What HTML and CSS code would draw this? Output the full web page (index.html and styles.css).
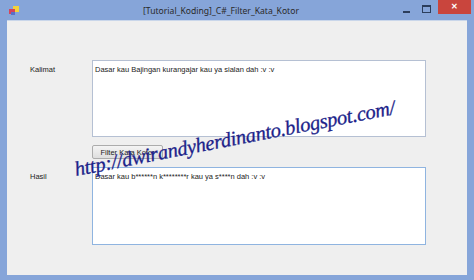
FILE: index.html
```html
<!DOCTYPE html>
<html lang="en">
<head>
  <meta charset="UTF-8" />
  <title>[Tutorial_Koding]_C#_Filter_Kata_Kotor</title>
  <link rel="stylesheet" href="styles.css">
</head>
<body>

  <div class="window">
    <div class="titlebar">
      <svg class="app-icon" width="10" height="10" viewBox="0 0 10 10">
        <rect x="4" y="0" width="6" height="6" fill="#f4d23a"/>
        <rect x="0" y="3" width="6" height="5" fill="#d6455a"/>
        <rect x="2" y="6" width="4" height="3" fill="#5a6fc7"/>
      </svg>
      <div class="title">[Tutorial_Koding]_C#_Filter_Kata_Kotor</div>
      <div class="controls">
        <span class="btn-min"></span>
        <span class="btn-max"></span>
        <span class="btn-close">&#x2715;</span>
      </div>
    </div>

    <div class="client">
      <div class="form">
        <label class="lbl">Kalimat</label>
        <div class="textbox">Dasar kau Bajingan kurangajar kau ya sialan dah :v :v</div>

        <div></div>
        <button class="filter-btn">Filter Kata Kotor</button>

        <label class="lbl">Hasil</label>
        <div class="textbox focused">Dasar kau b******n k********r kau ya s****n dah :v :v</div>
      </div>

      <div class="watermark">http://dwirandyherdinanto.blogspot.com/</div>
    </div>
  </div>

</body>
</html>
```

FILE: styles.css
```css
body {
  margin: 0;
  width: 474px;
  height: 280px;
  overflow: hidden;
  font-family: 'Liberation Sans', Arial, sans-serif;
}

.window {
  width: 474px;
  height: 280px;
  background: #86a5d9;
  display: flex;
  flex-direction: column;
  box-sizing: border-box;
  padding: 0 7px 5px 7px;
}

.titlebar {
  height: 20px;
  display: flex;
  align-items: center;
  position: relative;
  flex-shrink: 0;
}

.app-icon {
  margin-left: 2px;
  margin-top: 2px;
}

.title {
  flex: 1;
  text-align: center;
  font-family: 'Noto Sans', sans-serif;
  font-size: 8.6px;
  color: #2a2a2a;
  margin-top: 1px;
  padding-left: 20px;
}

.controls {
  display: flex;
  align-items: flex-start;
  align-self: flex-start;
  height: 20px;
  margin-right: -4px;
}

.btn-min {
  width: 7px;
  height: 2px;
  background: #2c3e5c;
  margin-top: 11px;
  margin-right: 12px;
}

.btn-max {
  width: 7px;
  height: 5px;
  border: 1px solid #2c3e5c;
  border-top-width: 2px;
  margin-top: 5px;
  margin-right: 7px;
}

.btn-close {
  width: 33px;
  height: 14px;
  background: #c9453d;
  color: #fff;
  font-size: 8px;
  line-height: 14px;
  text-align: center;
  font-weight: bold;
}

.client {
  flex: 1;
  background: #efefef;
  position: relative;
  padding: 40px 0 0 23px;
  border-top: 1px solid #c9d6ea;
}

.form {
  display: grid;
  grid-template-columns: 62px 334px;
  grid-template-rows: 77px 14px 78px;
  row-gap: 8px;
  margin-top: -1px;
}

.lbl {
  font-size: 7.5px;
  color: #222;
  padding-top: 5px;
}

.textbox {
  background: #fff;
  border: 1px solid #b5c0d3;
  font-size: 7.5px;
  color: #222;
  padding: 4px 2px;
  box-sizing: border-box;
}

.textbox.focused {
  border-color: #8fb4e0;
}

.filter-btn {
  width: 71px;
  height: 14px;
  padding: 0;
  font-family: 'Liberation Sans', Arial, sans-serif;
  font-size: 7.5px;
  color: #222;
  background: linear-gradient(#f4f4f4, #dedede);
  border: 1px solid #acacac;
  border-radius: 2px;
}

.watermark {
  position: absolute;
  left: 70px;
  top: 137px;
  font-family: 'Liberation Serif', serif;
  font-style: italic;
  font-size: 20.5px;
  color: #1c1f8a;
  transform: rotate(-11deg);
  transform-origin: left bottom;
  white-space: nowrap;
  letter-spacing: -0.3px;
  -webkit-text-stroke: 0.3px #1c1f8a;
}
```
